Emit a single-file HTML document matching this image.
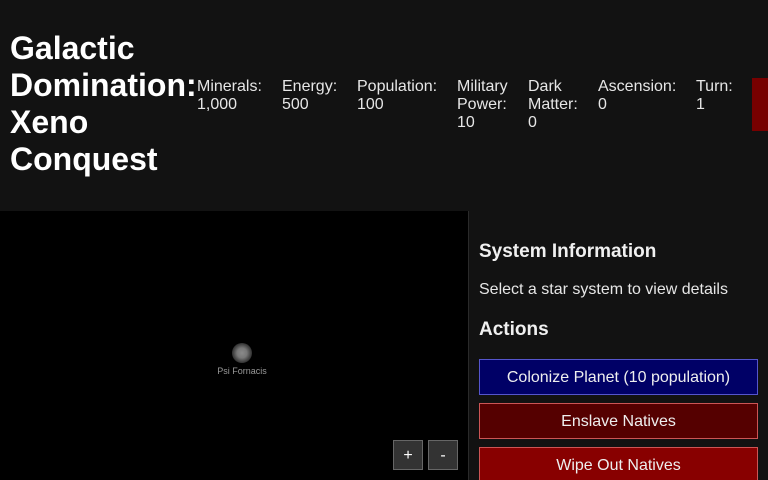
<!DOCTYPE html>
<html><head><style>
*{margin:0;padding:0;box-sizing:border-box}
html,body{width:768px;height:480px;overflow:hidden}
body{background:#111;font-family:"Liberation Sans",sans-serif;color:#eee;position:relative}
.hdr{position:absolute;left:0;top:0;width:768px;height:211px;background:#121212}
h1{position:absolute;left:10px;top:30px;font-size:32px;line-height:37px;font-weight:bold;color:#fff}
.stat{position:absolute;top:78px;font-size:16px;line-height:18px;color:#e6e6e6}
.rb{position:absolute;left:752px;top:78px;width:30px;height:53px;background:#700}
.map{position:absolute;left:0;top:211px;width:468px;height:269px;background:#000}
.panel{position:absolute;left:468px;top:211px;width:300px;height:269px;background:#121212;border-left:1px solid #2a2a2a}
.star{position:absolute;left:232px;top:343px;width:20px;height:20px;border-radius:50%;background:radial-gradient(circle,#8a8a8a 0,#777 35%,#444 60%,transparent 100%)}
.lbl{position:absolute;left:205px;top:366px;width:74px;text-align:center;font-size:9px;color:#999}
.zb{position:absolute;top:440px;width:30px;height:30px;background:#333;border:1px solid #666;color:#fff;font-size:16px;text-align:center;line-height:29px}
h3{position:absolute;left:479px;font-size:19px;font-weight:bold;color:#f0f0f0}
.txt{position:absolute;left:479px;top:281px;font-size:16px;color:#e6e6e6}
.btn{position:absolute;left:479px;width:279px;height:36px;font-size:16px;text-align:center;line-height:35px;color:#eee}
</style></head><body>
<div class="hdr">
<h1>Galactic<br>Domination:<br>Xeno<br>Conquest</h1>
<div class="stat" style="left:197px">Minerals:<br>1,000</div>
<div class="stat" style="left:282px">Energy:<br>500</div>
<div class="stat" style="left:357px">Population:<br>100</div>
<div class="stat" style="left:457px">Military<br>Power:<br>10</div>
<div class="stat" style="left:528px">Dark<br>Matter:<br>0</div>
<div class="stat" style="left:598px">Ascension:<br>0</div>
<div class="stat" style="left:696px">Turn:<br>1</div>
<div class="rb"></div>
</div>
<div class="map"></div>
<div class="star"></div>
<div class="lbl">Psi Fornacis</div>
<div class="zb" style="left:393px">+</div>
<div class="zb" style="left:428px">-</div>
<div class="panel"></div>
<h3 style="top:241px">System Information</h3>
<div class="txt">Select a star system to view details</div>
<h3 style="top:319px">Actions</h3>
<div class="btn" style="top:359px;background:#006;border:1px solid #55c">Colonize Planet (10 population)</div>
<div class="btn" style="top:403px;background:#500;border:1px solid #c55">Enslave Natives</div>
<div class="btn" style="top:447px;background:#800;border:1px solid #c55">Wipe Out Natives</div>
</body></html>
